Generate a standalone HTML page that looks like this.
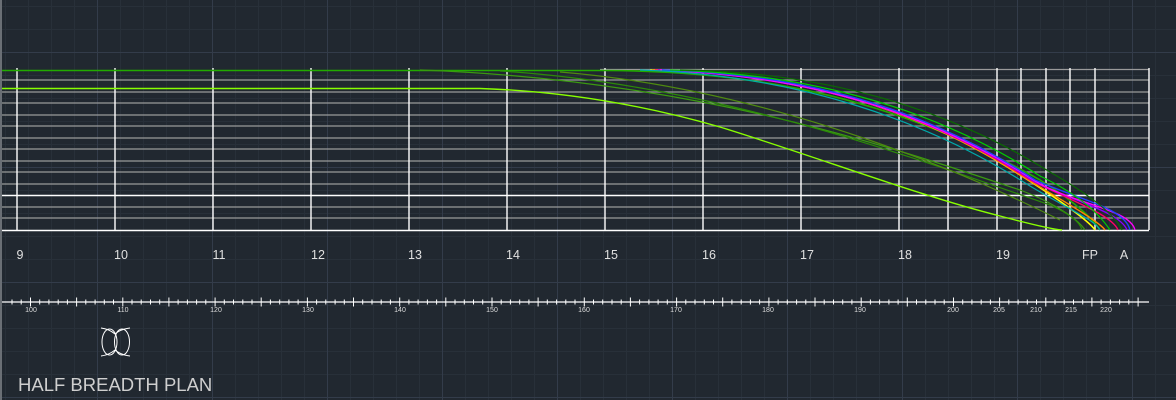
<!DOCTYPE html>
<html><head><meta charset="utf-8"><style>
html,body{margin:0;padding:0;background:#212830;width:1176px;height:400px;overflow:hidden}
svg{display:block}
text{font-family:"Liberation Sans",sans-serif}
</style></head><body>
<svg width="1176" height="400" viewBox="0 0 1176 400" xmlns="http://www.w3.org/2000/svg">
<rect width="1176" height="400" fill="#212830"/>
<g stroke="#283039" stroke-width="1">
<path d="M5.5 0V400M28.5 0V400M51.5 0V400M74.5 0V400M120.5 0V400M143.5 0V400M166.5 0V400M189.5 0V400M235.5 0V400M258.5 0V400M281.5 0V400M304.5 0V400M350.5 0V400M373.5 0V400M396.5 0V400M419.5 0V400M465.5 0V400M488.5 0V400M511.5 0V400M534.5 0V400M580.5 0V400M603.5 0V400M626.5 0V400M649.5 0V400M695.5 0V400M718.5 0V400M741.5 0V400M764.5 0V400M810.5 0V400M833.5 0V400M856.5 0V400M879.5 0V400M925.5 0V400M948.5 0V400M971.5 0V400M994.5 0V400M1040.5 0V400M1063.5 0V400M1086.5 0V400M1109.5 0V400M1155.5 0V400"/>
<path d="M0 6.5H1176M0 29.5H1176M0 75.5H1176M0 98.5H1176M0 121.5H1176M0 144.5H1176M0 190.5H1176M0 213.5H1176M0 236.5H1176M0 259.5H1176M0 305.5H1176M0 328.5H1176M0 351.5H1176M0 374.5H1176"/>
</g>
<g stroke="#333c4a" stroke-width="1">
<path d="M97.5 0V400M212.5 0V400M327.5 0V400M442.5 0V400M557.5 0V400M672.5 0V400M787.5 0V400M902.5 0V400M1017.5 0V400M1132.5 0V400"/>
<path d="M0 52.5H1176M0 167.5H1176M0 282.5H1176M0 397.5H1176"/>
</g>
<rect x="0" y="0" width="2" height="400" fill="#6a6f75"/>
<g stroke="#9a9a9a" stroke-width="1.2">
<path d="M2 80H1149M2 92H1149M2 103H1149M2 115H1149M2 126H1149M2 138H1149M2 149H1149M2 161H1149M2 172H1149M2 184H1149M2 207H1149M2 218H1149M600 69.5H1149"/>
</g>
<g stroke="#ffffff" stroke-width="1.4">
<path d="M2 195.5H1149M2 230.5H1149"/>
<path d="M17 68V230M115 68V230M213 68V230M311 68V230M409 68V230M507 68V230M605 68V230M703 68V230M801 68V230M899 68V230M948 68V230M997 68V230M1021 68V230M1046 68V230M1070 68V230M1095 68V230M1149 68V230"/>
</g>
<g fill="none" stroke-width="1.2">
<path d="M2 70.5H600C760 70 900 100 1040 180C1080 205 1095 222 1100 230" stroke="#22aa00" stroke-width="1.6"/>
<path d="M2 88.5H480C560 91 640 104 720 127C820 158 920 196 1000 216C1030 224 1050 229 1062 230" stroke="#88ff00" stroke-width="1.4"/>
<path d="M420 70C700 80 900 150 1020 190C1060 205 1080 222 1085 230" stroke="#3a9a10"/>
<path d="M500 71C720 85 920 160 1050 205C1070 214 1080 222 1082 230" stroke="#2b8a08"/>
<path d="M560 72C780 90 980 180 1060 220" stroke="#4e8a10"/>
<path d="M650 70C800 72 920 110 1020 175C1060 200 1090 222 1095 230" stroke="#ffff00" stroke-width="1.6"/>
<path d="M652 70C805 73 925 112 1025 178C1065 202 1100 222 1105 230" stroke="#ff8800" stroke-width="1.4"/>
<path d="M655 70C810 74 930 114 1030 180C1070 200 1112 215 1118 230" stroke="#ff0066" stroke-width="1.4"/>
<path d="M658 70C815 75 935 116 1035 182C1075 202 1120 212 1127 230" stroke="#8800ff" stroke-width="1.4"/>
<path d="M660 70C820 76 940 118 1040 184C1080 205 1130 210 1135 230" stroke="#ff00ff" stroke-width="1.4"/>
<path d="M662 70C815 74 935 114 1035 180C1080 200 1125 208 1130 230" stroke="#2244ff" stroke-width="1.4"/>
<path d="M640 70C800 75 930 122 1030 186C1070 210 1095 220 1100 230" stroke="#00aaaa" stroke-width="1.2"/>
<path d="M670 70C820 74 940 112 1040 176C1080 195 1100 215 1110 230" stroke="#00cc00" stroke-width="1.2"/>
<path d="M680 70C830 72 950 110 1050 172C1090 195 1115 215 1122 230" stroke="#0a6a00" stroke-width="1.2"/>
</g>
<g fill="#e0e0e0" font-size="12.5" text-anchor="middle">
<text x="20" y="259">9</text><text x="121" y="259">10</text><text x="219" y="259">11</text><text x="318" y="259">12</text><text x="415" y="259">13</text><text x="513" y="259">14</text><text x="611" y="259">15</text><text x="709" y="259">16</text><text x="807" y="259">17</text><text x="905" y="259">18</text><text x="1003" y="259">19</text><text x="1090" y="259">FP</text><text x="1124" y="259">A</text>
</g>
<path d="M2 302H1149" stroke="#fff" stroke-width="1.2"/>
<g id="ticks" stroke="#fff" stroke-width="1"></g>
<g fill="#ddd" font-size="7" text-anchor="middle">
<text x="31" y="312">100</text><text x="123" y="312">110</text><text x="216" y="312">120</text><text x="308" y="312">130</text><text x="400" y="312">140</text><text x="492" y="312">150</text><text x="584" y="312">160</text><text x="676" y="312">170</text><text x="768" y="312">180</text><text x="860" y="312">190</text><text x="953" y="312">200</text><text x="999" y="312">205</text><text x="1036" y="312">210</text><text x="1071" y="312">215</text><text x="1106" y="312">220</text>
</g>
<g fill="none" stroke="#fff" stroke-width="1">
<ellipse cx="109.5" cy="342" rx="7.5" ry="13"/>
<ellipse cx="122" cy="342" rx="7.5" ry="13"/>
<path d="M101 328Q109 329 115 334Q121 329 130 328M101 356Q109 355 115 350Q121 355 130 356"/>
</g>
<text x="18" y="391" fill="#cfcfcf" font-size="18.5">HALF BREADTH PLAN</text>
<script>
var g=document.getElementById('ticks'),s='';
for(var i=0;i<=123;i++){var x=12+i*9.23;if(x>1147)break;var h=(i%5==2)?9:5;s+='M'+x.toFixed(1)+' '+(302-h/2)+'V'+(302+h/2);}
var p=document.createElementNS('http://www.w3.org/2000/svg','path');p.setAttribute('d',s);g.appendChild(p);
</script>
</svg>
</body></html>
